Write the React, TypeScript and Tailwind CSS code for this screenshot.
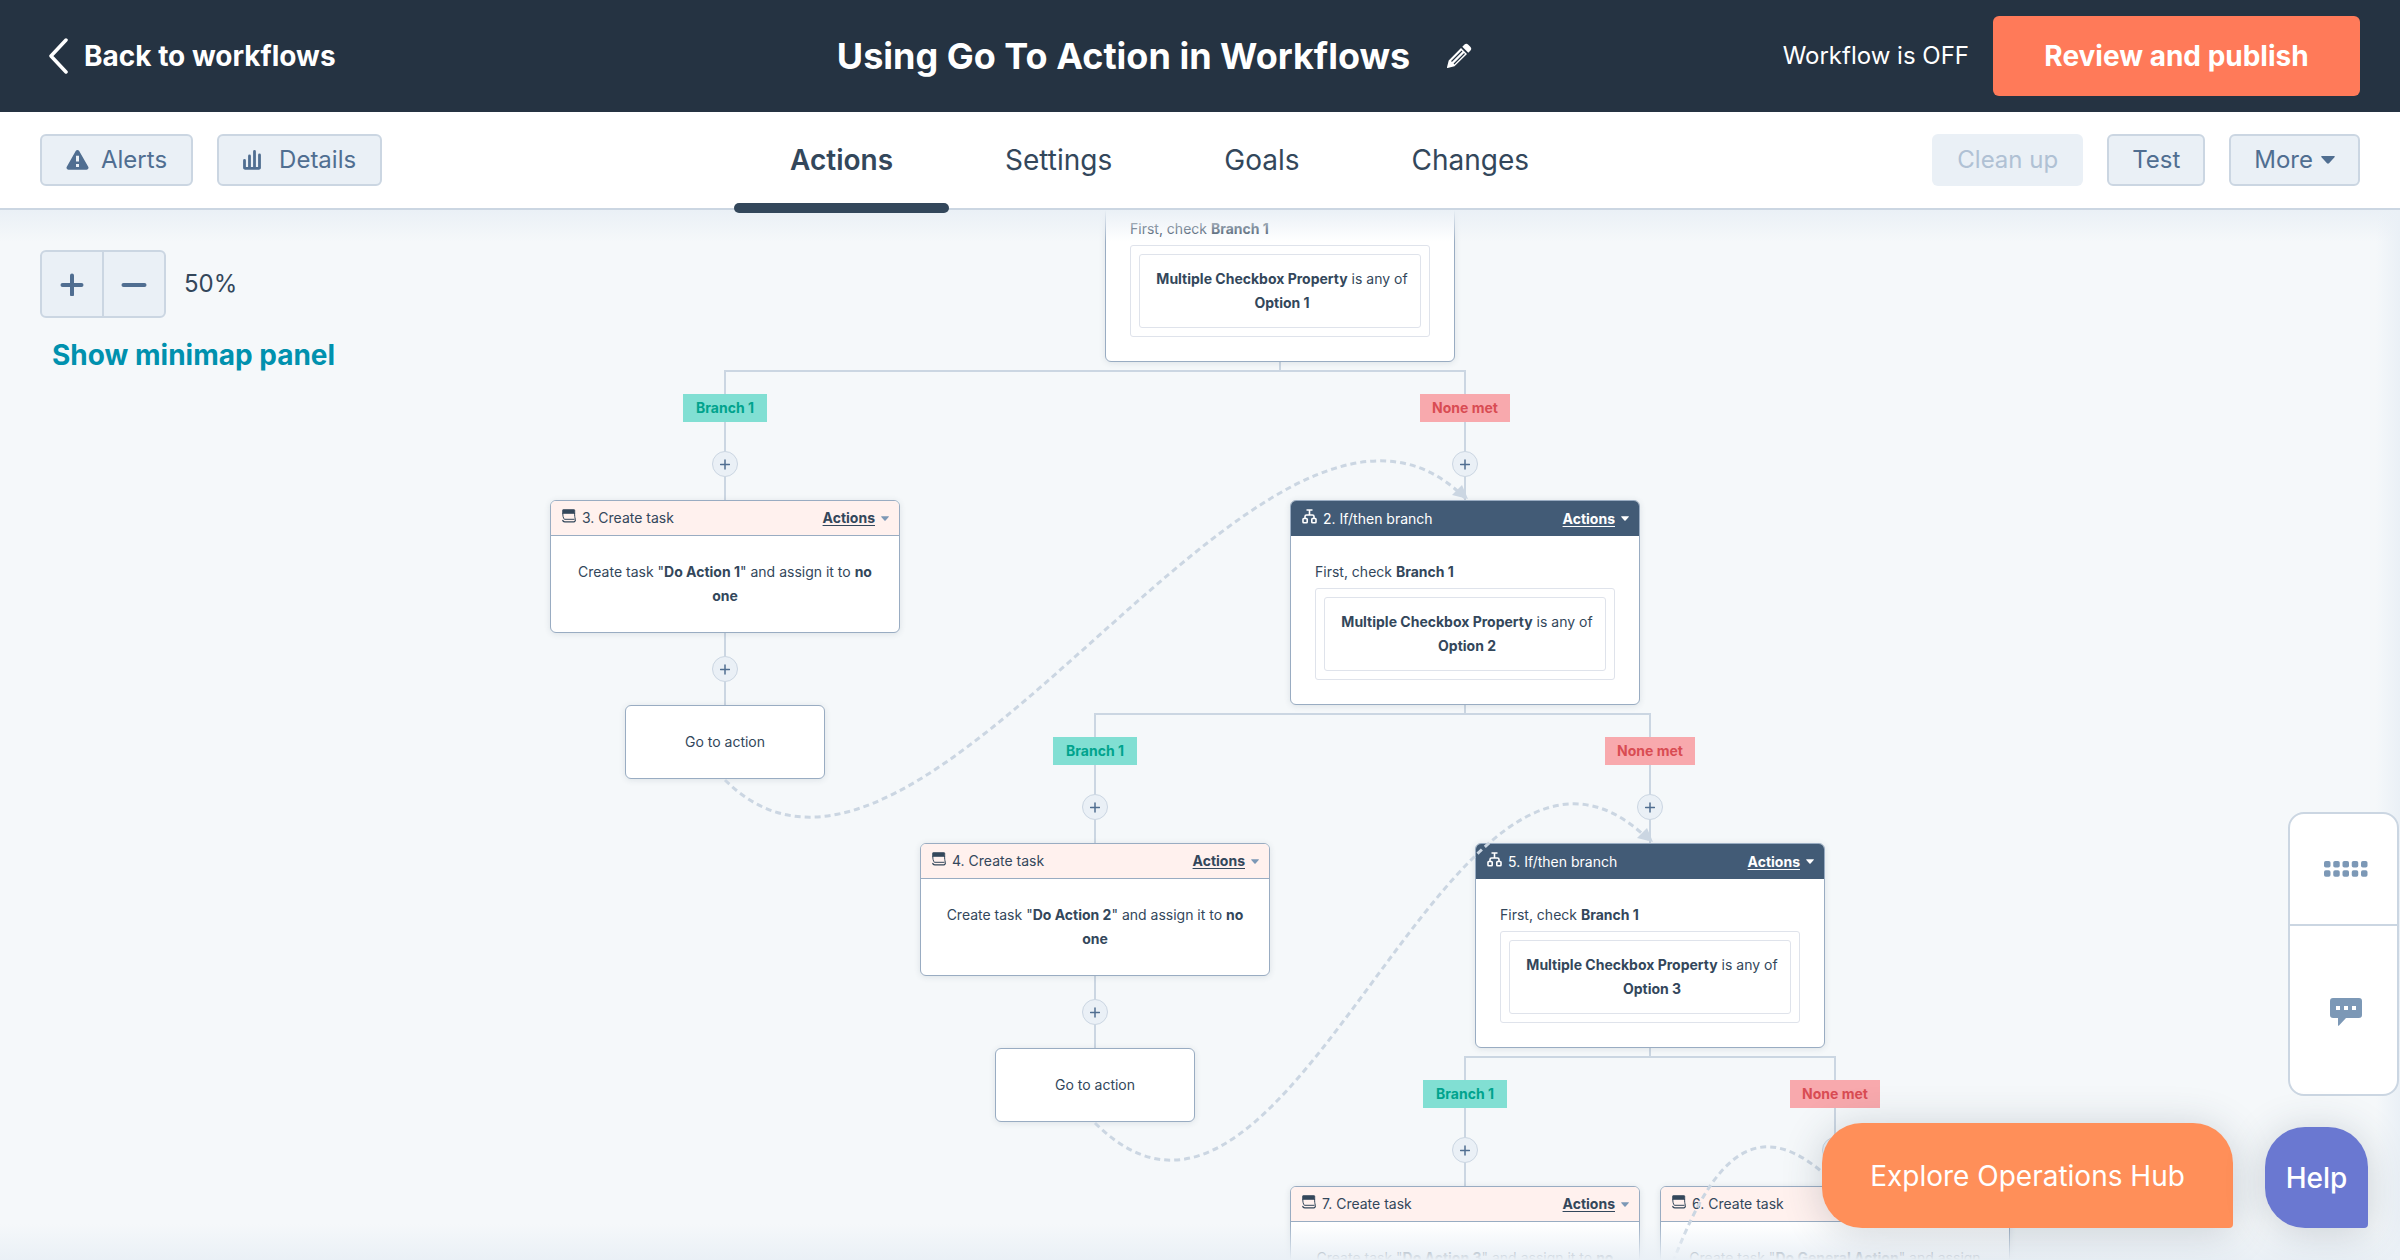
import type { ReactNode } from "react";

interface Point {
    x: number;
    y: number;
}

interface TaskNode extends Point {
    step: number;
    title: string;
    body: ReactNode;
}

interface BranchNode extends Point {
    step?: number;
    option: string;
}

// Canvas coordinates: x is the centre of the card, y is its top edge.
// The first branch is scrolled past its header, so it has no step to show.
const branches: BranchNode[] = [
    { x: 1280, y: -18, option: "Option 1" },
    { x: 1465, y: 290, step: 2, option: "Option 2" },
    { x: 1650, y: 633, step: 5, option: "Option 3" },
];

const tasks: TaskNode[] = [
    { x: 725, y: 290, step: 3, title: "Do Action 1", body: <>and assign it to <b>no<br />one</b></> },
    { x: 1095, y: 633, step: 4, title: "Do Action 2", body: <>and assign it to <b>no<br />one</b></> },
    { x: 1465, y: 976, step: 7, title: "Do Action 3", body: <>and assign it to <b>no</b></> },
    { x: 1835, y: 976, step: 6, title: "Do General Action", body: "and assign" },
];

const gotos: Point[] = [
    { x: 725, y: 495 },
    { x: 1095, y: 838 },
];

const splits = [
    { from: 1280, left: 725, right: 1465, y: 152 },
    { from: 1465, left: 1095, right: 1650, y: 495 },
    { from: 1650, left: 1465, right: 1835, y: 838 },
];

const jumps = [
    { x1: 725, y1: 570, x2: 1465, y2: 288 },
    { x1: 1095, y1: 913, x2: 1650, y2: 631 },
    { x1: 1465, y1: 1256, x2: 1835, y2: 974 },
];

const tabs = ["Actions", "Settings", "Goals", "Changes"];

const toolButton =
    "flex h-[52px] items-center rounded-md border-2 border-[#cbd6e2] bg-[#eaf0f6] text-2xl text-[#506e91]";

function TaskIcon() {
    return (
        <svg width="14" height="14" viewBox="0 0 14 14" fill="none" stroke="currentColor" aria-hidden="true">
            <path d="M.5 1.500C.5.900.9.500 1.500.5h10.300c.6 0 1 .4 1 1v3H.5z" fill="currentColor" strokeWidth=".6" />
            <path d="M.8 4c0 3 .3 4.800 1.600 6.300h10.200M12.600 4c0 2.800.2 4.300.7 6.200" strokeWidth="1" />
            <path d="M.6 10.800c.2 1.300 1 2 2.200 2h9c1 0 1.700-.8 1.600-2.400" strokeWidth="1.200" />
        </svg>
    );
}

function BranchIcon() {
    return (
        <svg width="15" height="15" viewBox="0 0 15 15" fill="none" stroke="currentColor" strokeWidth="1.600" aria-hidden="true">
            <path d="M4.500 1h6M7.500 1v5M3 9.500V7.500C3 6.500 3.500 6 4.500 6h6c1 0 1.500.5 1.500 1.500v2" />
            <rect x="1" y="9.500" width="4.200" height="4.200" rx=".8" />
            <rect x="9.800" y="9.500" width="4.200" height="4.200" rx=".8" />
        </svg>
    );
}

function Caret({ className }: { className: string }) {
    return (
        <svg viewBox="0 0 14 8" className={className} fill="currentColor" aria-hidden="true">
            <path d="M1 0h12c.8 0 1 .7.500 1.200L8 7.300c-.6.6-1.400.6-2 0L.5 1.200C0 .7.200 0 1 0z" />
        </svg>
    );
}

function NodeHeader({ step, title, dark }: { step: number; title: string; dark?: boolean }) {
    return (
        <div
            className={`flex h-[35px] items-center rounded-t-[5px] pr-2.5 pl-[11px] ${dark ? "bg-[#425b76] text-white" : "border-b border-[#99acc2] bg-[#fff1ee]"
                }`}
        >
            <span className="mb-1">{dark ? <BranchIcon /> : <TaskIcon />}</span>
            <span className="ml-1.5">{step}. {title}</span>
            <button className="ml-auto flex items-center gap-1.5 font-bold">
                <span className="underline underline-offset-2">Actions</span>
                <Caret className={`h-[5px] w-2 ${dark ? "text-white" : "text-[#7c98b6]"}`} />
            </button>
        </div>
    );
}

const card = "absolute -translate-x-1/2 rounded-md border border-[#99acc2] bg-white shadow-[0_1px_6px_rgba(45,62,80,0.12)]";

function BranchCard({ x, y, step, option }: BranchNode) {
    return (
        <div className={`${card} w-[350px]`} style={{ left: x, top: y }}>
            {step && <NodeHeader step={step} title="If/then branch" dark />}
            <div className="p-6">
                <p>First, check <b>Branch 1</b></p>
                <div className="mt-1 rounded-[3px] border border-[#dfe3eb] p-2">
                    <p className="rounded-[3px] border border-[#dfe3eb] py-3 pl-1 text-center whitespace-nowrap">
                        <b>Multiple Checkbox Property</b> is any of
                        <br />
                        <b>{option}</b>
                    </p>
                </div>
            </div>
        </div>
    );
}

function TaskCard({ x, y, step, title, body }: TaskNode) {
    return (
        <div className={`${card} w-[350px]`} style={{ left: x, top: y }}>
            <NodeHeader step={step} title="Create task" />
            <p className="py-6 text-center whitespace-nowrap">
                Create task "<b>{title}</b>" {body}
            </p>
        </div>
    );
}

function AddButton({ x, y }: Point) {
    return (
        <button
            aria-label="Add action"
            className="absolute flex size-[26px] -translate-x-1/2 -translate-y-1/2 items-center justify-center rounded-full border border-[#cbd6e2] bg-[#eaf0f6] text-[#506e91]"
            style={{ left: x, top: y }}
        >
            <svg width="10" height="12" viewBox="0 0 10 12" stroke="currentColor" strokeWidth="1.500" strokeLinecap="round" aria-hidden="true">
                <path d="M5 2v9M.5 6.500h9" />
            </svg>
        </button>
    );
}

function BranchLabel({ x, y, met }: Point & { met: boolean }) {
    return (
        <span
            className={`absolute flex h-7 -translate-x-1/2 items-center justify-center font-bold whitespace-nowrap ${met ? "w-[84px] bg-[#81dfd3] text-[#00a38d]" : "w-[90px] bg-[#f8a9ad] text-[#d94c53]"
                }`}
            style={{ left: x, top: y }}
        >
            {met ? "Branch 1" : "None met"}
        </span>
    );
}

function Canvas() {
    return (
        <div className="absolute inset-0 text-sm leading-6 text-[#33475b]">
            {/* Straight connectors */}
            <svg className="absolute inset-0 h-full w-full" fill="none" stroke="#cbd6e2" strokeWidth="2" aria-hidden="true">
                {splits.map((s) => (
                    <path
                        key={s.y}
                        d={`M${s.from} ${s.y}v9M${s.left} ${s.y + 138}V${s.y + 9}H${s.right}V${s.y + 138}`}
                    />
                ))}
                {gotos.map((g) => (
                    <path key={g.y} d={`M${g.x} ${g.y}v-72`} />
                ))}
            </svg>

            {splits.map((s) => (
                <div key={s.y}>
                    <BranchLabel x={s.left} y={s.y + 32} met />
                    <BranchLabel x={s.right} y={s.y + 32} met={false} />
                    <AddButton x={s.left} y={s.y + 102} />
                    <AddButton x={s.right} y={s.y + 102} />
                </div>
            ))}

            {branches.map((b) => <BranchCard key={b.option} {...b} />)}
            {tasks.map((t) => <TaskCard key={t.step} {...t} />)}
            {gotos.map((g) => (
                <div key={g.y}>
                    <AddButton x={g.x} y={g.y - 36} />
                    <div
                        className={`${card} flex h-[74px] w-[200px] items-center justify-center`}
                        style={{ left: g.x, top: g.y }}
                    >
                        Go to action
                    </div>
                </div>
            ))}

            {/* Dashed jumps run over the cards */}
            <svg className="pointer-events-none absolute inset-0 h-full w-full" aria-hidden="true">
                {jumps.map((j) => (
                    <g key={j.x1}>
                        <path
                            d={`M${j.x1} ${j.y1}C${j.x1 + 200} ${j.y1 + 200} ${j.x2 - 200} ${j.y2 - 200} ${j.x2} ${j.y2}`}
                            fill="none"
                            stroke="#cbd6e2"
                            strokeWidth="3"
                            strokeDasharray="6 4"
                        />
                        <path d={`M${j.x2 + 3} ${j.y2 + 1}l-16-4 10-10z`} fill="#cbd6e2" />
                    </g>
                ))}
            </svg>
        </div>
    );
}

export default function App() {
    return (
        <div className="flex h-screen flex-col overflow-hidden bg-[#f5f8fa] font-['Inter',sans-serif] text-[#33475b]">
            <header className="flex h-28 shrink-0 items-center bg-[#253342] px-10 text-white">
                <a href="#" className="flex w-[34%] items-center gap-4 pl-2 text-[28px] font-bold">
                    <svg width="20" height="36" viewBox="0 0 20 36" fill="none" stroke="currentColor" strokeWidth="3.500" strokeLinecap="round" strokeLinejoin="round" aria-hidden="true">
                        <path d="M18 2L3 18l15 16" />
                    </svg>
                    Back to workflows
                </a>
                <h1 className="pl-2 text-4xl font-bold">Using Go To Action in Workflows</h1>
                <button aria-label="Edit name" className="ml-9">
                    <svg width="26" height="26" viewBox="0 0 26 26" fill="currentColor" aria-hidden="true">
                        <path d="M18.500 1.500c1.200-1.200 2.600-1 3.800.2l2 2c1.200 1.200 1.300 2.600.2 3.800l-2.200 2.200-6-6z" />
                        <path d="M15 5l6 6L8.500 23.300 1.600 25c-.5.100-.8-.2-.6-.7L2.700 17.500z" />
                        <path d="M5.500 18.500L16 8M8 21L18.500 10.500" stroke="#253342" strokeWidth="1.200" />
                    </svg>
                </button>
                <span className="ml-auto text-2xl">Workflow is OFF</span>
                <button className="ml-6 h-20 w-[367px] rounded-md bg-[#ff7a59] text-[28px] font-bold">
                    Review and publish
                </button>
            </header>

            <div className="flex h-[98px] shrink-0 items-center border-b-2 border-[#cbd6e2] bg-white px-10">
                <div className="flex w-[30%] gap-6">
                    <button className={`${toolButton} gap-3 px-6`}>
                        <svg width="23" height="20" viewBox="0 0 23 20" aria-hidden="true">
                            <path d="M9.700 1c.8-1.300 2.700-1.300 3.500 0l9 15.800c.8 1.400-.1 2.900-1.700 2.900h-18C.9 19.700 0 18.200.8 16.800z" fill="currentColor" />
                            <path d="M11.500 5.800v5.700M11.500 14v3" stroke="#eaf0f6" strokeWidth="3" />
                        </svg>
                        Alerts
                    </button>
                    <button className={`${toolButton} gap-[18px] px-6`}>
                        <svg width="18" height="20" viewBox="0 0 18 20" fill="none" stroke="currentColor" strokeWidth="2.800" strokeLinecap="round" aria-hidden="true">
                            <path d="M1.500 10.500v7.500M6.500 6v12M11.500 1.500V18M16.500 5v13M2 18.300h14" />
                        </svg>
                        Details
                    </button>
                </div>
                <nav className="-ml-0.5 flex self-stretch">
                    {tabs.map((tab) => (
                        <button
                            key={tab}
                            className={`relative px-14 text-[28px] ${tab === "Actions" ? "font-semibold" : ""}`}
                        >
                            {tab}
                            {tab === "Actions" && (
                                <span className="absolute inset-x-0 -bottom-[5px] z-10 h-2.5 rounded-full bg-[#33475b]" />
                            )}
                        </button>
                    ))}
                </nav>
                <div className="ml-auto flex gap-6">
                    <button disabled className="h-[52px] rounded-md bg-[#eaf0f6] px-[25px] text-2xl text-[#b0c1d4]">
                        Clean up
                    </button>
                    <button className={`${toolButton} px-[23px]`}>Test</button>
                    <button className={`${toolButton} gap-2 px-[23px]`}>
                        More
                        <Caret className="h-2 w-3.5" />
                    </button>
                </div>
            </div>

            <main className="relative flex-1 overflow-hidden">
                <Canvas />

                {/* Edge fades */}
                <div className="pointer-events-none absolute inset-x-0 top-0 h-8 bg-gradient-to-b from-[#eaf0f6] to-transparent" />
                <div className="pointer-events-none absolute inset-x-0 bottom-0 h-9 bg-gradient-to-t from-[#eaf0f6] to-transparent" />
                <div className="pointer-events-none absolute inset-y-0 right-0 w-6 bg-gradient-to-l from-[#eaf0f6] to-transparent" />

                <div className="relative inline-flex flex-col items-start gap-4 p-10">
                    <div className="flex items-center gap-[18px] text-2xl">
                        <div className="flex h-[68px] w-[126px] divide-x-2 divide-[#cbd6e2] rounded-md border-2 border-[#cbd6e2] bg-[#eaf0f6] text-[#506e91]">
                            <button aria-label="Zoom in" className="flex flex-1 items-center justify-center">
                                <svg width="24" height="24" viewBox="0 0 24 24" stroke="currentColor" strokeWidth="4" strokeLinecap="round" aria-hidden="true">
                                    <path d="M12 3.500v19M2.500 13h19" />
                                </svg>
                            </button>
                            <button aria-label="Zoom out" className="flex flex-1 items-center justify-center">
                                <svg width="26" height="24" viewBox="0 0 26 24" stroke="currentColor" strokeWidth="4" strokeLinecap="round" aria-hidden="true">
                                    <path d="M2.500 13h21" />
                                </svg>
                            </button>
                        </div>
                        50%
                    </div>
                    <button className="px-3 text-[28px] font-bold text-[#0091ae]">Show minimap panel</button>
                </div>

                <aside className="absolute right-px bottom-[164px] flex h-[284px] w-[111px] flex-col divide-y-2 divide-[#cbd6e2] rounded-2xl border-2 border-[#cbd6e2] bg-white text-[#7c98b6]">
                    <button aria-label="Keyboard shortcuts" className="flex h-[112px] items-center justify-center pl-1">
                        <svg width="44" height="16" viewBox="0 0 44 16" fill="currentColor" aria-hidden="true">
                            {[0, 9.25, 18.5, 27.75, 37].map((x) => (
                                <g key={x}>
                                    <rect x={x} y="0" width="6.500" height="6.500" rx="1.800" />
                                    <rect x={x} y="9.250" width="6.500" height="6.500" rx="1.800" />
                                </g>
                            ))}
                        </svg>
                    </button>
                    <button aria-label="Comments" className="flex flex-1 items-center justify-center pt-1 pl-1">
                        <svg width="32" height="28" viewBox="0 0 32 28" aria-hidden="true">
                            <path d="M3 0h26a3 3 0 0 1 3 3v14a3 3 0 0 1-3 3H16l-7 7.500c-.4.400-1 .300-1-.3V20H3a3 3 0 0 1-3-3V3a3 3 0 0 1 3-3z" fill="currentColor" />
                            <path d="M6 8h4v4H6zM14 8h4v4h-4zM22 8h4v4h-4z" fill="#fff" />
                        </svg>
                    </button>
                </aside>

                <div className="absolute right-8 bottom-8 flex items-end gap-8 text-[28px] text-white">
                    <button className="h-[105px] w-[411px] rounded-[40px] rounded-br-[4px] bg-[#ff8f59] shadow-[0_4px_40px_rgba(45,62,80,0.22)]">
                        Explore Operations Hub
                    </button>
                    <button className="h-[101px] w-[103px] rounded-[40px] rounded-br-[4px] bg-[#6a78d1] font-medium shadow-[0_4px_40px_rgba(45,62,80,0.22)]">
                        Help
                    </button>
                </div>
            </main>
        </div>
    );
}
